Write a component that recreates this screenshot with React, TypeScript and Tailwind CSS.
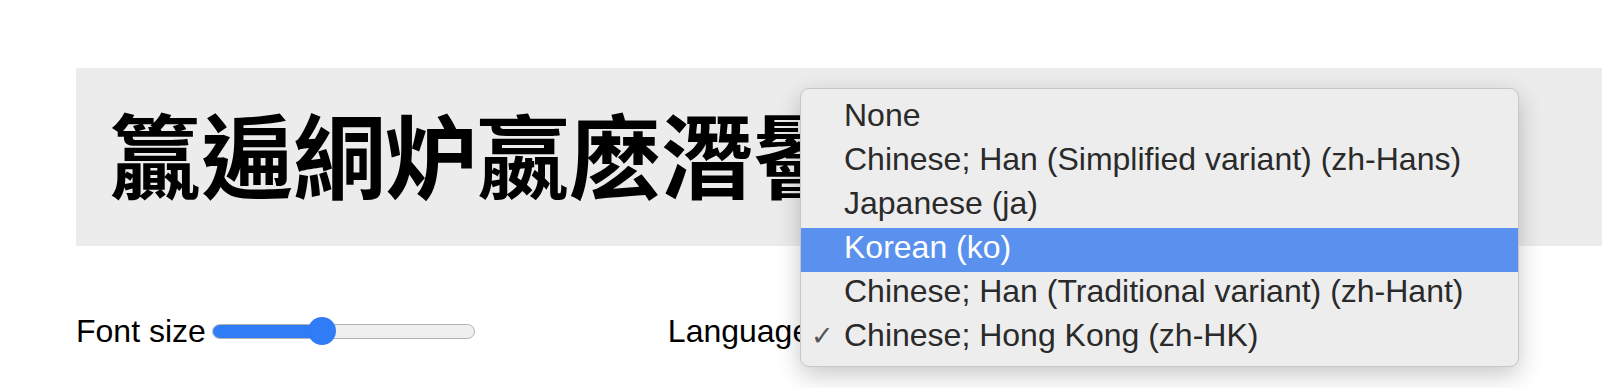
const options = [
  "None",
  "Chinese; Han (Simplified variant) (zh-Hans)",
  "Japanese (ja)",
  "Korean (ko)",
  "Chinese; Han (Traditional variant) (zh-Hant)",
  "Chinese; Hong Kong (zh-HK)",
];

const highlighted = "Korean (ko)";
const selected = "Chinese; Hong Kong (zh-HK)";

function Slider({ value }: { value: number }) {
  return (
    <div className="relative ml-[6px] h-[30px] w-[263px] flex items-center">
      <div className="h-[15px] w-full rounded-full border border-[#b2b2b2] bg-[#efefef] overflow-hidden">
        <div className="h-full bg-[#2f7cf6]" style={{ width: `${value}%` }} />
      </div>
      <div
        className="absolute top-[1px] h-[28px] w-[28px] -translate-x-1/2 rounded-full bg-[#2f7cf6]"
        style={{ left: `${value}%` }}
      />
    </div>
  );
}

export default function App() {
  return (
    <div className="relative h-[388px] w-full overflow-hidden bg-white font-['Liberation_Sans',Arial,sans-serif] text-black">
      <div className="pt-[68px] pl-[76px]">
        <div className="flex h-[178px] items-center overflow-hidden bg-[#ececec] pb-[10px] pl-[33px]">
          <p className="whitespace-nowrap font-['Noto_Sans_CJK_TC','Noto_Sans_CJK_SC',sans-serif] text-[92px] font-bold leading-none">
            籯遍絧炉嬴麽潛鬠鬡鬢鬣
          </p>
        </div>
        <div className="mt-[65px] flex h-[40px] items-center text-[32px]">
          <span>Font size</span>
          <Slider value={42} />
          <span className="ml-[193px]">Language</span>
        </div>
      </div>

      <div className="absolute left-[800px] top-[88px] w-[719px] overflow-hidden rounded-[9px] border border-[#c6c6c6] bg-[#ededed] pt-[7px] pb-[6px] shadow-[0_8px_24px_rgba(0,0,0,0.22)]">
        {options.map((o) => (
          <div
            key={o}
            className={`flex h-[44px] items-center text-[32px] leading-none ${
              o === highlighted ? "bg-[#5a91ee] text-white" : "text-[#2a2a2a]"
            }`}
          >
            <span className="w-[43px] pb-[6px] pl-[10px] font-['DejaVu_Sans',sans-serif] text-[27px] text-[#555]">
              {o === selected ? "✓" : ""}
            </span>
            <span className="whitespace-nowrap pb-[6px]">{o}</span>
          </div>
        ))}
      </div>
    </div>
  );
}
